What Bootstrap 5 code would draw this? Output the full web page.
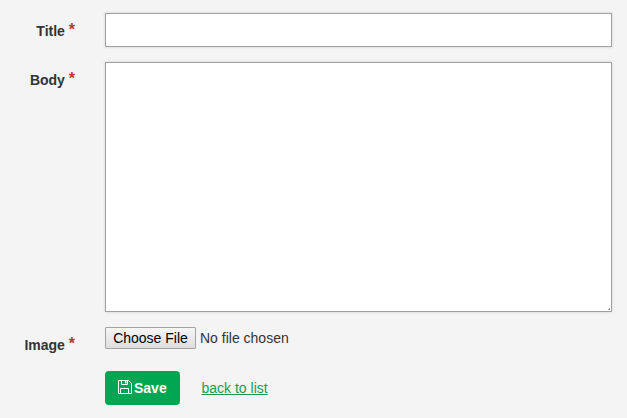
<!DOCTYPE html>
<html lang="en">
<head>
    <meta charset="UTF-8">
    <meta name="viewport" content="width=device-width, initial-scale=1.0">
    <title>New Post</title>
    <link href="https://cdn.jsdelivr.net/npm/bootstrap@5.3.0/dist/css/bootstrap.min.css" rel="stylesheet">
    <style>
        body {
            background: #f4f4f4;
            color: #333;
            font: 14px/20px "Liberation Sans", Arial, sans-serif;
            overflow: hidden;
        }
        .post-form {
            padding: 13px 15px 0 0;
        }
        .field-row {
            margin-bottom: 15px;
        }
        .field-label {
            width: 75px;
            margin-right: 30px;
            padding-top: 8px;
            font-weight: bold;
        }
        .required-star {
            color: #c43235;
            font-size: 16px;
            line-height: 1;
            vertical-align: 1px;
        }
        .post-form .form-control {
            border: 1px solid #a0a0a0;
            border-radius: 0;
            box-shadow: 0 0 3px rgba(0, 0, 0, .14);
            resize: none;
            font-size: 14px;
        }
        .title-input { height: 34px; }
        .body-input { height: 250px; }
        .body-wrap::after {
            content: "";
            position: absolute;
            right: 2px;
            bottom: 2px;
            border: 1px solid #777;
            border-top-color: transparent;
            border-left-color: transparent;
        }
        .file-row { height: 44px; }
        .file-btn {
            height: 22px;
            width: 91px;
            line-height: 20px;
            color: #000;
            border: 1px solid #a3a3a3;
            border-radius: 1px;
            background: linear-gradient(#f6f6f6, #dedede);
        }
        .file-name { line-height: 22px; }
        .btn-save {
            width: 75px;
            height: 34px;
            padding: 0 0 0 13px;
            font-size: 14px;
            font-weight: bold;
            line-height: 20px;
            border: 0;
            border-radius: 4px;
            --bs-btn-color: #fff;
            --bs-btn-bg: #00a651;
            --bs-btn-hover-color: #fff;
            --bs-btn-hover-bg: #008d45;
        }
        .save-icon {
            margin-right: 2px;
            margin-bottom: 2px;
        }
        .back-link {
            margin-left: 21.5px;
            color: #169c52;
        }
    </style>
</head>
<body>
<form class="post-form">
    <div class="d-flex field-row">
        <label for="title" class="field-label text-end">Title <span class="required-star">*</span></label>
        <div class="flex-grow-1">
            <input type="text" id="title" class="form-control title-input">
        </div>
    </div>

    <div class="d-flex field-row">
        <label for="body" class="field-label text-end">Body <span class="required-star">*</span></label>
        <div class="flex-grow-1 position-relative body-wrap">
            <textarea id="body" class="form-control body-input d-block"></textarea>
        </div>
    </div>

    <div class="d-flex file-row">
        <label for="image" class="field-label text-end">Image <span class="required-star">*</span></label>
        <div class="d-flex">
            <label for="image" class="file-btn text-center">Choose File</label>
            <span class="file-name ms-1" id="fileName">No file chosen</span>
            <input type="file" id="image" class="d-none">
        </div>
    </div>

    <div class="d-flex align-items-center">
        <div class="field-label"></div>
        <button type="submit" class="btn btn-save d-flex align-items-center">
            <svg width="14" height="14" viewBox="0 0 14 14" fill="none" stroke="#fff" class="save-icon">
                <path d="M.5 .5h10L13.500 3.500v10H.5z"/>
                <path d="M3.500 .5v4h6v-4M2.500 13.500v-5h8v5"/>
                <path d="M7 1h1.500v2.500H7z" fill="#fff" stroke="none"/>
            </svg>Save
        </button>
        <a href="#" class="back-link">back to list</a>
    </div>
</form>

<script src="https://cdn.jsdelivr.net/npm/bootstrap@5.3.0/dist/js/bootstrap.bundle.min.js"></script>
<script>
    document.getElementById('image').addEventListener('change', function() {
        document.getElementById('fileName').textContent = this.files.length ? this.files[0].name : 'No file chosen';
    });
</script>
</body>
</html>
